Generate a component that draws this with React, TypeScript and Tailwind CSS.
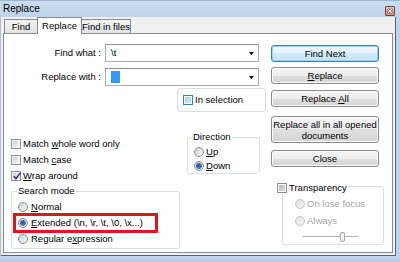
import React from "react";

function U({ children }: { children: React.ReactNode }) {
  return <span className="underline underline-offset-[1px] decoration-[1px]">{children}</span>;
}

function CheckBox({ checked = false, variant = "normal" }: { checked?: boolean; variant?: "normal" | "hover" | "gray" }) {
  const outer = variant === "hover" ? "border-[#3c7fb1]" : "border-[#8e8f8f]";
  const inner =
    variant === "hover"
      ? "bg-[linear-gradient(135deg,#9fcbee,#dff0fc)]"
      : variant === "gray"
      ? "bg-[linear-gradient(135deg,#b8b8b8,#dcdcdc)]"
      : "bg-[linear-gradient(135deg,#cdd0d5,#f7f7f7)]";
  return (
    <div className={`relative w-[10px] h-[10px] shrink-0 border ${outer} bg-white p-px`}>
      <div className={`w-full h-full ${inner}`} />
      {checked && (
        <svg className="absolute left-[0px] top-[-1px]" width="10" height="10" viewBox="0 0 10 10">
          <path d="M1.8 5.2 L4 7.8 L8.6 1.6" fill="none" stroke="#23386a" strokeWidth="1.5" />
        </svg>
      )}
    </div>
  );
}

function Radio({ checked = false, disabled = false }: { checked?: boolean; disabled?: boolean }) {
  return (
    <div
      className={`relative w-[10px] h-[10px] shrink-0 rounded-full border ${
        disabled
          ? "border-[#c4c4c4] bg-[linear-gradient(135deg,#e2e2e2,#f4f4f4)]"
          : "border-[#8e8f8f] bg-[linear-gradient(135deg,#cdd0d5,#f7f7f7)]"
      } flex items-center justify-center`}
    >
      {checked && (
        <div className="w-[6px] h-[6px] rounded-full bg-[radial-gradient(circle_at_40%_40%,#1b4f8f,#3f8fd6_70%,#8cc4ee)] border border-[#2a5c97]" />
      )}
    </div>
  );
}

function Btn({
  children,
  def = false,
  h = "h-[17px]",
  mt,
}: {
  children: React.ReactNode;
  def?: boolean;
  h?: string;
  mt: string;
}) {
  return (
    <div
      className={`${mt} ${h} w-[108px] rounded-[3px] border flex items-center justify-center text-center leading-[11px] ${
        def
          ? "border-[#3c7fb1] bg-[linear-gradient(#eef7fd_0%,#e3f2fb_50%,#d3eaf8_50%,#c4e2f4_100%)] shadow-[inset_0_0_0_1px_#9fd3f4]"
          : "border-[#8a8a8a] bg-[linear-gradient(#f5f5f5_0%,#ededed_50%,#e0e0e0_50%,#d4d4d4_100%)] shadow-[inset_0_0_0_1px_#fcfcfc]"
      }`}
    >
      <span>{children}</span>
    </div>
  );
}

function Combo({ children }: { children?: React.ReactNode }) {
  return (
    <div className="ml-[4px] w-[154px] h-[18px] border border-[#abadb3] border-t-[#8e9299] bg-white flex items-center pl-[5px] pr-[4px]">
      <div className="flex-1 flex items-center">{children}</div>
      <svg width="5" height="3" viewBox="0 0 5 3">
        <path d="M0 0 H5 L2.5 3 Z" fill="#000" />
      </svg>
    </div>
  );
}

function CheckRow({ label, checked }: { label: React.ReactNode; checked?: boolean }) {
  return (
    <div className="h-[16px] flex items-center gap-[2px]">
      <CheckBox checked={checked} />
      <span>{label}</span>
    </div>
  );
}

export default function App() {
  return (
    <div className="w-[400px] h-[262px] overflow-hidden flex flex-col bg-[#bfd3eb] font-['Liberation_Sans',Arial,sans-serif] text-[9.5px] leading-[12px] text-black">
      {/* Title bar */}
      <div className="h-[17px] shrink-0 flex items-center justify-between pl-[3px] pr-[5px] bg-[linear-gradient(#cbdcf0,#bed4ec)] border-t border-[#9fb6d3]">
        <span className="text-[10px] text-[#000]">Replace</span>
        <div className="w-[10px] h-[10px] mt-[3px] border border-[#8d3b33] rounded-[1px] bg-[linear-gradient(#e9c4bc,#c98a80)] flex items-center justify-center">
          <svg width="6" height="6" viewBox="0 0 6 6">
            <path d="M1 1 L5 5 M5 1 L1 5" stroke="#5a1d18" strokeWidth="2.2" />
            <path d="M1 1 L5 5 M5 1 L1 5" stroke="#ffffff" strokeWidth="1.1" />
          </svg>
        </div>
      </div>

      {/* Body */}
      <div className="flex-1 flex flex-col">
        <div className="flex-1 flex">
          <div className="w-[1px] bg-[#aebfd3]" />
          {/* Client */}
          <div className="w-[395px] bg-[#f0f0f0] border-r border-b border-[#50657e] flex flex-col pl-[2px]">
            {/* Tabs */}
            <div className="h-[16px] flex items-end pl-[1px] relative z-10 whitespace-nowrap">
              <div className="h-[14px] w-[34px] border border-b-0 border-[#898c95] bg-[linear-gradient(#f3f3f3,#e2e2e2)] flex items-center justify-center">
                Find
              </div>
              <div className="h-[17px] w-[45px] -ml-px -mb-px border border-b-0 border-[#898c95] bg-white flex items-start justify-center pt-[2px]">
                Replace
              </div>
              <div className="h-[14px] w-[50px] -ml-px border border-b-0 border-[#898c95] bg-[linear-gradient(#f3f3f3,#e2e2e2)] flex items-center justify-center">
                <span>Find in files</span>
              </div>
            </div>

            {/* Panel */}
            <div className="w-[390px] h-[220px] border border-[#898c95] bg-white flex">
              {/* Left column */}
              <div className="w-[262px] flex flex-col">
                <div className="mt-[10px] flex items-center">
                  <div className="w-[97px] text-right">Find what :</div>
                  <Combo>
                    <span>\t</span>
                  </Combo>
                </div>
                <div className="mt-[6px] flex items-center">
                  <div className="w-[97px] text-right">Replace with :</div>
                  <Combo>
                    <div className="w-[9px] h-[12px] bg-[#3399ff]" />
                  </Combo>
                </div>

                <div className="mt-[2px] ml-[173px] w-[89px] h-[24px] border border-[#d5dfe5] rounded-[3px] flex items-center pl-[5px] gap-[2px]">
                  <CheckBox variant="hover" />
                  <span>In selection</span>
                </div>

                <div className="mt-[24px] flex">
                  <div className="ml-[7px] w-[176px] flex flex-col">
                    <CheckRow
                      label={
                        <>
                          Match <U>w</U>hole word only
                        </>
                      }
                    />
                    <CheckRow
                      label={
                        <>
                          Match <U>c</U>ase
                        </>
                      }
                    />
                    <CheckRow
                      checked
                      label={
                        <>
                          <U>W</U>rap around
                        </>
                      }
                    />
                  </div>
                  <div className="relative mt-[1px] w-[73px] h-[37px] border border-[#d5dfe5] rounded-[3px] pt-[7px] pl-[6px]">
                    <span className="absolute left-[4px] top-[-7px] bg-white px-[1px]">Direction</span>
                    <div className="h-[14px] flex items-center gap-[2px]">
                      <Radio />
                      <span>
                        <U>U</U>p
                      </span>
                    </div>
                    <div className="h-[14px] flex items-center gap-[2px]">
                      <Radio checked />
                      <span>
                        <U>D</U>own
                      </span>
                    </div>
                  </div>
                </div>

                {/* Search mode */}
                <div className="relative mt-[7px] ml-[7px] w-[169px] h-[58px] border border-[#d5dfe5] rounded-[3px] pt-[7px] pl-[6px]">
                  <span className="absolute left-[5px] top-[-7px] bg-white px-[1px]">Search mode</span>
                  <div className="h-[16px] flex items-center gap-[3px]">
                    <Radio />
                    <span>
                      <U>N</U>ormal
                    </span>
                  </div>
                  <div className="-my-[2px] -ml-[5px] w-[145px] h-[20px] border-[3px] border-[#e4141b] flex items-center gap-[3px] pl-[2px]">
                    <Radio checked />
                    <span>
                      <U>E</U>xtended (\n, \r, \t, \0, \x...)
                    </span>
                  </div>
                  <div className="h-[16px] flex items-center gap-[3px]">
                    <Radio />
                    <span>
                      Regular e<U>x</U>pression
                    </span>
                  </div>
                </div>
              </div>

              {/* Right column */}
              <div className="ml-[5px] flex flex-col">
                <Btn mt="mt-[11px]" def>
                  Find Next
                </Btn>
                <Btn mt="mt-[5px]">
                  <U>R</U>eplace
                </Btn>
                <Btn mt="mt-[6px]">
                  Replace <U>A</U>ll
                </Btn>
                <Btn mt="mt-[9px]" h="h-[27px]">
                  Replace all in all opened
                  <br />
                  documents
                </Btn>
                <Btn mt="mt-[7px]">Close</Btn>

                {/* Transparency */}
                <div className="relative mt-[19px] ml-[11px] w-[102px] h-[59px] border border-[#d5dfe5] rounded-[3px] pt-[9px] pl-[12px] text-[#a3a3a3]">
                  <div className="absolute left-[-6px] top-[-5px] flex items-center gap-[2px] bg-white pr-[1px] text-black">
                    <CheckBox variant="gray" />
                    <span>Transparency</span>
                  </div>
                  <div className="h-[15px] flex items-center gap-[2px]">
                    <Radio disabled />
                    <span>On lose focus</span>
                  </div>
                  <div className="mt-[2px] h-[15px] flex items-center gap-[2px]">
                    <Radio disabled />
                    <span>Always</span>
                  </div>
                  <div className="mt-[2px] h-[14px] ml-[7px] w-[56px] flex items-center">
                    <div className="relative w-full h-[2px] border-t border-[#b4b4b4] border-b border-b-white">
                      <div className="absolute left-[38px] top-[-5px] w-[5px] h-[10px] rounded-[2px] border border-[#a8a8a8] bg-[#f2f2f2]" />
                    </div>
                  </div>
                </div>
              </div>
            </div>
          </div>
          <div className="flex-1 bg-[#bfd3eb]" />
        </div>
        <div className="h-[6px] bg-[linear-gradient(#c4d7ee,#b4cbe6)]" />
      </div>
    </div>
  );
}
